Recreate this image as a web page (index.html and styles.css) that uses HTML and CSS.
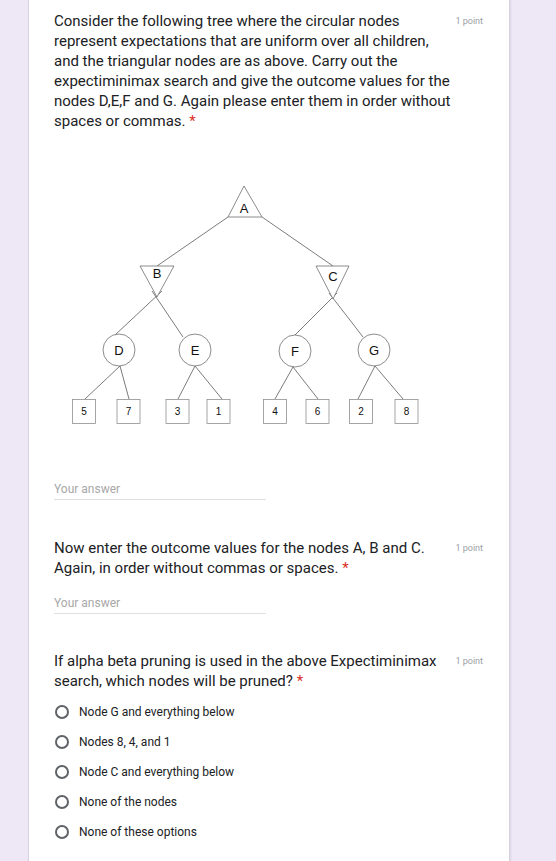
FILE: index.html
```html
<!DOCTYPE html>
<html>
<head>
<meta charset="utf-8">
<link rel="stylesheet" href="styles.css">
</head>
<body>
<div class="page">
  <div class="card">
    <div class="question q1">
      <div class="qhead">
        <div class="qtitle">Consider the following tree where the circular nodes represent expectations that are uniform over all children, and the triangular nodes are as above. Carry out the expectiminimax search and give the outcome values for the nodes D,E,F and G. Again please enter them in order without spaces or commas. <span class="req">*</span></div>
        <div class="points">1 point</div>
      </div>
      <div class="figure">
        <svg width="380" height="250" viewBox="60 180 380 250" xmlns="http://www.w3.org/2000/svg">
          <g stroke="#5a5a5a" stroke-width="0.8" fill="none">
            <line x1="228" y1="217" x2="157" y2="266"/>
            <line x1="262" y1="217" x2="333" y2="266"/>
            <line x1="162" y1="291" x2="115" y2="335"/>
            <line x1="152" y1="291" x2="183" y2="337"/>
            <line x1="337" y1="293" x2="295" y2="335"/>
            <line x1="329" y1="293" x2="363" y2="337"/>
            <line x1="120" y1="366" x2="85" y2="399"/>
            <line x1="120" y1="366" x2="129" y2="399"/>
            <line x1="195" y1="366" x2="178" y2="399"/>
            <line x1="195" y1="366" x2="222" y2="399"/>
            <line x1="293" y1="367" x2="275" y2="399"/>
            <line x1="293" y1="367" x2="318" y2="399"/>
            <line x1="375" y1="366" x2="358" y2="399"/>
            <line x1="375" y1="366" x2="403" y2="399"/>
          </g>
          <g stroke="#6e6e6e" stroke-width="0.8" fill="#fff">
            <polygon points="244,186 228,217 262,217"/>
            <polygon points="140,266 174,266 157,297"/>
            <polygon points="316,266 349,266 333,299"/>
            <circle cx="119" cy="350" r="16"/>
            <circle cx="195" cy="350" r="16"/>
            <circle cx="295" cy="351" r="16"/>
            <circle cx="374" cy="350" r="16"/>
          </g>
          <g stroke="#909090" stroke-width="0.8" fill="#fff">
            <rect x="72.5" y="399.5" width="23" height="24"/>
            <rect x="117" y="399.5" width="23" height="24"/>
            <rect x="166" y="399.5" width="23" height="24"/>
            <rect x="207" y="399.5" width="23" height="24"/>
            <rect x="263.5" y="399.5" width="23" height="24"/>
            <rect x="306" y="399.5" width="23" height="24"/>
            <rect x="349.5" y="399.5" width="23" height="24"/>
            <rect x="395" y="399.5" width="23" height="24"/>
          </g>
          <g class="nlabel" text-anchor="middle">
            <text x="244" y="213">A</text>
            <text x="157" y="278">B</text>
            <text x="333" y="281">C</text>
            <text x="119" y="355">D</text>
            <text x="195" y="355">E</text>
            <text x="295" y="356">F</text>
            <text x="374" y="355">G</text>
          </g>
          <g class="llabel" text-anchor="middle">
            <text x="84" y="415">5</text>
            <text x="128.5" y="415">7</text>
            <text x="177.5" y="415">3</text>
            <text x="218.5" y="415">1</text>
            <text x="275" y="415">4</text>
            <text x="317.5" y="415">6</text>
            <text x="361" y="415">2</text>
            <text x="406.5" y="415">8</text>
          </g>
        </svg>
      </div>
      <div class="answer a1">Your answer</div>
    </div>

    <div class="question q2">
      <div class="qhead">
        <div class="qtitle">Now enter the outcome values for the nodes A, B and C. Again, in order without commas or spaces. <span class="req">*</span></div>
        <div class="points">1 point</div>
      </div>
      <div class="answer a2">Your answer</div>
    </div>

    <div class="question q3">
      <div class="qhead">
        <div class="qtitle">If alpha beta pruning is used in the above Expectiminimax search, which nodes will be pruned? <span class="req">*</span></div>
        <div class="points">1 point</div>
      </div>
      <div class="options">
        <div class="option"><span class="radio"></span><span class="olabel">Node G and everything below</span></div>
        <div class="option"><span class="radio"></span><span class="olabel">Nodes 8, 4, and 1</span></div>
        <div class="option"><span class="radio"></span><span class="olabel">Node C and everything below</span></div>
        <div class="option"><span class="radio"></span><span class="olabel">None of the nodes</span></div>
        <div class="option"><span class="radio"></span><span class="olabel">None of these options</span></div>
      </div>
    </div>
  </div>
</div>
</body>
</html>
```

FILE: styles.css
```css
html, body {
  margin: 0;
  padding: 0;
  background: #ede7f6;
  height: 100%;
  overflow: hidden;
}
.page {
  padding-left: 28px;
  height: 100%;
}
.card {
  width: 482px;
  min-height: 100%;
  background: #fff;
  box-sizing: border-box;
  border-left: 1px solid #d6d0e0;
  border-right: 1px solid #d6d0e0;
  box-shadow: 1px 0 2px rgba(0,0,0,0.08);
  padding: 0 26px 0 25px;
  font-family: Roboto, "Liberation Sans", sans-serif;
  color: #202124;
}
.question { display: flex; flex-direction: column; }
.q1 { padding-top: 11px; }
.q2 { padding-top: 38px; }
.q3 { padding-top: 37px; }
.qhead {
  display: flex;
  justify-content: space-between;
  align-items: flex-start;
}
.qtitle {
  width: 400px;
  font-size: 15px;
  line-height: 20px;
  color: #202124;
}
.req { color: #d93025; }
.points {
  font-size: 9px;
  line-height: 20px;
  color: #9aa0a6;
  white-space: nowrap;
}
.figure {
  margin-top: 49px;
  margin-left: 6px;
  height: 250px;
}
.figure svg { display: block; }
.nlabel text {
  font-family: "Liberation Sans", Arial, sans-serif;
  font-size: 13px;
  fill: #111;
}
.llabel text {
  font-family: "Liberation Sans", Arial, sans-serif;
  font-size: 10px;
  fill: #111;
}
.answer {
  width: 212px;
  font-size: 12px;
  line-height: 14px;
  color: #a8a8a8;
  padding-bottom: 3px;
  border-bottom: 1px solid #e0e0e0;
}
.a1 { margin-top: 52px; }
.a2 { margin-top: 18px; }
.options {
  margin-top: 6px;
  display: flex;
  flex-direction: column;
}
.option {
  display: flex;
  align-items: center;
  height: 30px;
}
.radio {
  width: 10px;
  height: 10px;
  border: 2px solid #5f6368;
  border-radius: 50%;
  margin-left: 1px;
  margin-right: 10px;
  flex: none;
}
.olabel {
  font-size: 12px;
  color: #202124;
}
```
